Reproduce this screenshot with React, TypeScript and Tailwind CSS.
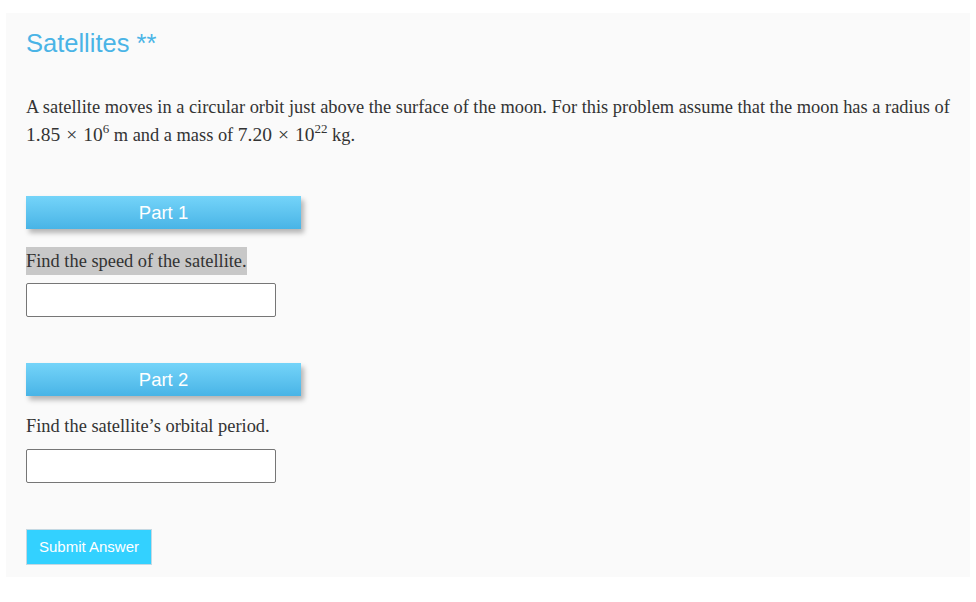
import React from "react";

/* ─────────────  Part header bar ───────────── */
const PartBar = ({ label }: { label: string }) => (
  <div className="w-[275px] h-[33px] flex items-center justify-center bg-gradient-to-b from-[#74d4f9] to-[#48b4e6] shadow-[3px_4px_5px_rgba(0,0,0,0.28)] text-white text-[18.5px] font-['Liberation_Sans',Arial,sans-serif]">
    {label}
  </div>
);

const AnswerBox = () => (
  <input
    type="text"
    className="block w-[250px] h-[34px] bg-white border border-[#767676] rounded-[2px] outline-none"
  />
);

// number × 10^exp, typeset a touch larger like the math renderer does
const Sci = ({ base, exp }: { base: string; exp: string }) => (
  <span className="text-[19.5px]">
    {base}
    <span className="mx-[6px]">×</span>10
    <sup className="text-[13px] relative -top-[8px] align-baseline">{exp}</sup>
  </span>
);

export default function App() {
  return (
    <div className="min-h-screen bg-white pt-[13px] px-[6px]">
      <div className="bg-[#fafafa] pt-[16px] pb-[12px] px-[20px] text-[#333] font-['Liberation_Serif','Times_New_Roman',serif]">
        {/* Title */}
        <h1 className="text-[25.5px] leading-[29px] text-[#4ab4e6] font-['Liberation_Sans',Arial,sans-serif]">
          Satellites **
        </h1>

        {/* Problem statement */}
        <p className="mt-[35px] text-[18.4px] leading-[28px]">
          A satellite moves in a circular orbit just above the surface of the moon. For this problem assume that the moon has a
          radius of <Sci base="1.85" exp="6" /> m and a mass of <Sci base="7.20" exp="22" /> kg.
        </p>

        {/* Part 1 */}
        <div className="mt-[47px]">
          <PartBar label="Part 1" />
          <p className="mt-[18px] text-[18.4px] leading-[28px]">
            <span className="inline-block bg-[#c8c8c8]">Find the speed of the satellite.</span>
          </p>
          <div className="mt-[8px]">
            <AnswerBox />
          </div>
        </div>

        {/* Part 2 */}
        <div className="mt-[46px]">
          <PartBar label="Part 2" />
          <p className="mt-[16px] text-[18.4px] leading-[28px]">Find the satellite’s orbital period.</p>
          <div className="mt-[9px]">
            <AnswerBox />
          </div>
        </div>

        {/* Submit */}
        <button className="mt-[46px] h-[36px] px-[12px] bg-[#33d1ff] border border-[#c4d8e2] text-white text-[15px] font-['Liberation_Sans',Arial,sans-serif]">
          Submit Answer
        </button>
      </div>
    </div>
  );
}
